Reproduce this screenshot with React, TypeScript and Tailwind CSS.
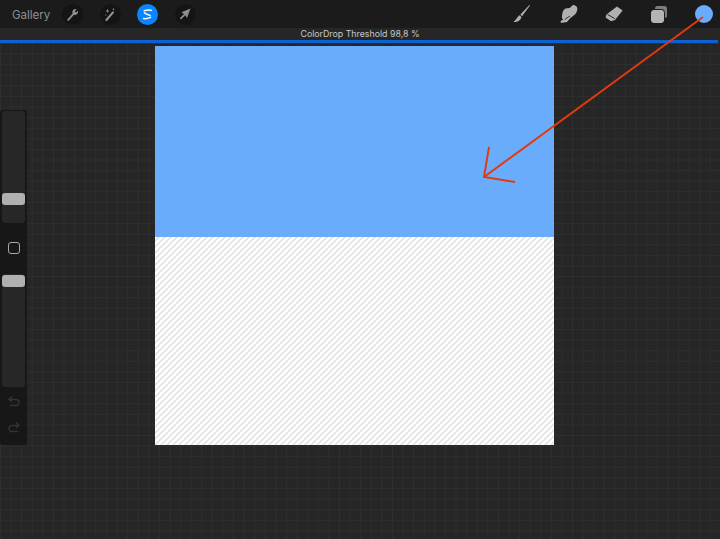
const ToolCircle = ({ children, active }: { children: React.ReactNode; active?: boolean }) => (
  <div className={`w-[21px] h-[21px] rounded-full flex items-center justify-center ${active ? "bg-[#0a84ff]" : "bg-[#141414]"}`}>
    {children}
  </div>
);

const App = () => {
  return (
    <div className="relative w-[720px] h-[539px] overflow-hidden bg-[#262626] font-['Inter','Liberation_Sans',sans-serif]">
      {/* top bar */}
      <header className="h-[28px] bg-[#1b1b1b] flex items-center pl-[12px] pr-[7px]">
        <span className="text-[11.5px] leading-none text-[#8f8f8f] w-[50px] mt-[3px]">Gallery</span>
        <div className="flex items-center gap-[16.5px]">
          <ToolCircle>
            <svg width="15" height="15" viewBox="0 0 15 15">
              <path d="M2 13 L7.6 6.6 A3.2 3.2 0 0 1 11.6 2.2 L9.8 4.4 L11 5.6 L13 3.8 A3.2 3.2 0 0 1 9 7.8 L3.4 14 Z" fill="#8f8f8f" />
            </svg>
          </ToolCircle>
          <ToolCircle>
            <svg width="15" height="15" viewBox="0 0 15 15">
              <path d="M3.4 13 L10 5.4" stroke="#8f8f8f" strokeWidth="2.2" strokeLinecap="round" />
              <path d="M4.5 2.5 v3 M3 4 h3 M10.5 1.5 v1.6 M9.7 2.3 h1.6 M2.2 8 h1.2" stroke="#8f8f8f" strokeWidth="0.9" />
            </svg>
          </ToolCircle>
          <ToolCircle active>
            <svg width="13" height="13" viewBox="0 0 13 13">
              <path d="M3.2 2.8 Q8 1.2 10.4 2.4 M3.4 4.8 Q6 6.4 9 7.4 M2.6 10.6 Q6 11 9.6 9.4" fill="none" stroke="#ffffff" strokeWidth="1.5" strokeLinecap="round" />
            </svg>
          </ToolCircle>
          <ToolCircle>
            <svg width="14" height="14" viewBox="0 0 14 14">
              <path d="M12.5 1.5 L9 11 L7.2 8.2 L3 12.4 L1.8 11.2 L6 7 L3.4 5.2 Z" fill="#8f8f8f" />
            </svg>
          </ToolCircle>
        </div>
        <div className="ml-auto flex items-center">
          <svg width="20" height="20" viewBox="0 0 20 20" className="mr-[28px]">
            <path d="M18.4 1 L9.4 10.6 L11 12.2 L19 1.6 Z" fill="#b0b0b0" />
            <path d="M8.6 11.2 C6.8 12 5.6 15.6 2.4 18 C6 18.6 9.6 16.6 10.4 13 Z" fill="#b0b0b0" />
          </svg>
          <svg width="20" height="20" viewBox="0 0 20 20" className="mr-[25px]">
            <path d="M14 1 C16 1 18.6 2.6 18.4 5 C18 8 16.6 10.4 14.6 11.6 L11 14.6 L8 18 L2 19 L1.6 17 L4.4 15.4 L3 14.6 C3 10 3.6 6 6.6 4.6 L10.6 4 Z" fill="#b0b0b0" />
            <path d="M5.8 15.4 L11 12" stroke="#1b1b1b" strokeWidth="0.8" />
          </svg>
          <svg width="20" height="18" viewBox="0 0 20 18" className="mr-[27px]">
            <path d="M13 1.6 L18.6 5.4 L11 15 L7 16.2 L1.6 12.4 L2.4 9.6 Z" fill="#b0b0b0" />
            <path d="M3.4 9.4 L10.8 13.6" stroke="#1b1b1b" strokeWidth="0.9" />
          </svg>
          <div className="relative w-[16px] h-[17px] mr-[28px]">
            <div className="absolute right-0 top-0 w-[12px] h-[12px] rounded-[2.5px] bg-[#7d7d7d]" />
            <div className="absolute left-0 bottom-0 w-[13px] h-[13px] rounded-[2.5px] bg-[#b4b4b4] outline outline-1 outline-[#1b1b1b]" />
          </div>
          <div className="w-[18px] h-[18px] rounded-full bg-[#6aacfc]" />
        </div>
      </header>

      {/* threshold label */}
      <div className="h-[12px] flex items-center justify-center">
        <span className="text-[8.8px] leading-none text-[#c8c8c8]">ColorDrop Threshold 98,8 %</span>
      </div>
      <div className="h-[3px] mr-[2px] bg-[#0c62d2]" />

      {/* canvas area */}
      <main className="h-[497px] pt-[3px] pl-[155px] bg-[#262626] bg-[linear-gradient(#2e2e2e_1px,transparent_1px),linear-gradient(90deg,#2e2e2e_1px,transparent_1px)] bg-[size:10.6px_10.6px]">
        <div className="w-[398.5px] h-[399px] flex flex-col">
          <div className="h-[191px] bg-[#6aacfc]" />
          <div className="h-[208px] bg-[repeating-linear-gradient(135deg,#ffffff_0px,#ffffff_2.1213px,#e8e8e8_2.1213px,#e8e8e8_4.2426px)]" />
        </div>
      </main>

      {/* side bar */}
      <aside className="absolute left-0 top-[110px] w-[27px] h-[335px] rounded-[3px] bg-[#171717] flex flex-col items-center">
        <div className="relative w-[23px] h-[112px] mt-[1px] rounded-[3px] bg-[#272727]">
          <div className="absolute left-0 top-[82px] w-[23px] h-[12px] rounded-[3px] bg-[#b0b0b0]" />
        </div>
        <div className="w-[12px] h-[12px] mt-[19px] rounded-[3px] border border-[#a8a8a8]" />
        <div className="relative w-[23px] h-[113px] mt-[20px] rounded-[3px] bg-[#272727]">
          <div className="absolute left-0 top-[1px] w-[23px] h-[12px] rounded-[3px] bg-[#b0b0b0]" />
        </div>
        <svg width="14" height="12" viewBox="0 0 14 12" className="mt-[8px]">
          <path d="M5 1.5 L2 4.5 L5 7 M2.5 4.5 H9 A3 3 0 0 1 9 10.5 H3" fill="none" stroke="#333333" strokeWidth="1.4" />
        </svg>
        <svg width="14" height="12" viewBox="0 0 14 12" className="mt-[14px]">
          <path d="M9 1.5 L12 4.5 L9 7 M11.5 4.5 H5 A3 3 0 0 0 5 10.5 H11" fill="none" stroke="#333333" strokeWidth="1.4" />
        </svg>
      </aside>

      {/* red annotation arrow */}
      <svg className="absolute left-0 top-0 pointer-events-none" width="720" height="539" viewBox="0 0 720 539">
        <path d="M703 17 L484 177 M489 147 L484 177 L515 182" fill="none" stroke="#e23a0e" strokeWidth="1.9" />
      </svg>
    </div>
  );
};

export default App;
